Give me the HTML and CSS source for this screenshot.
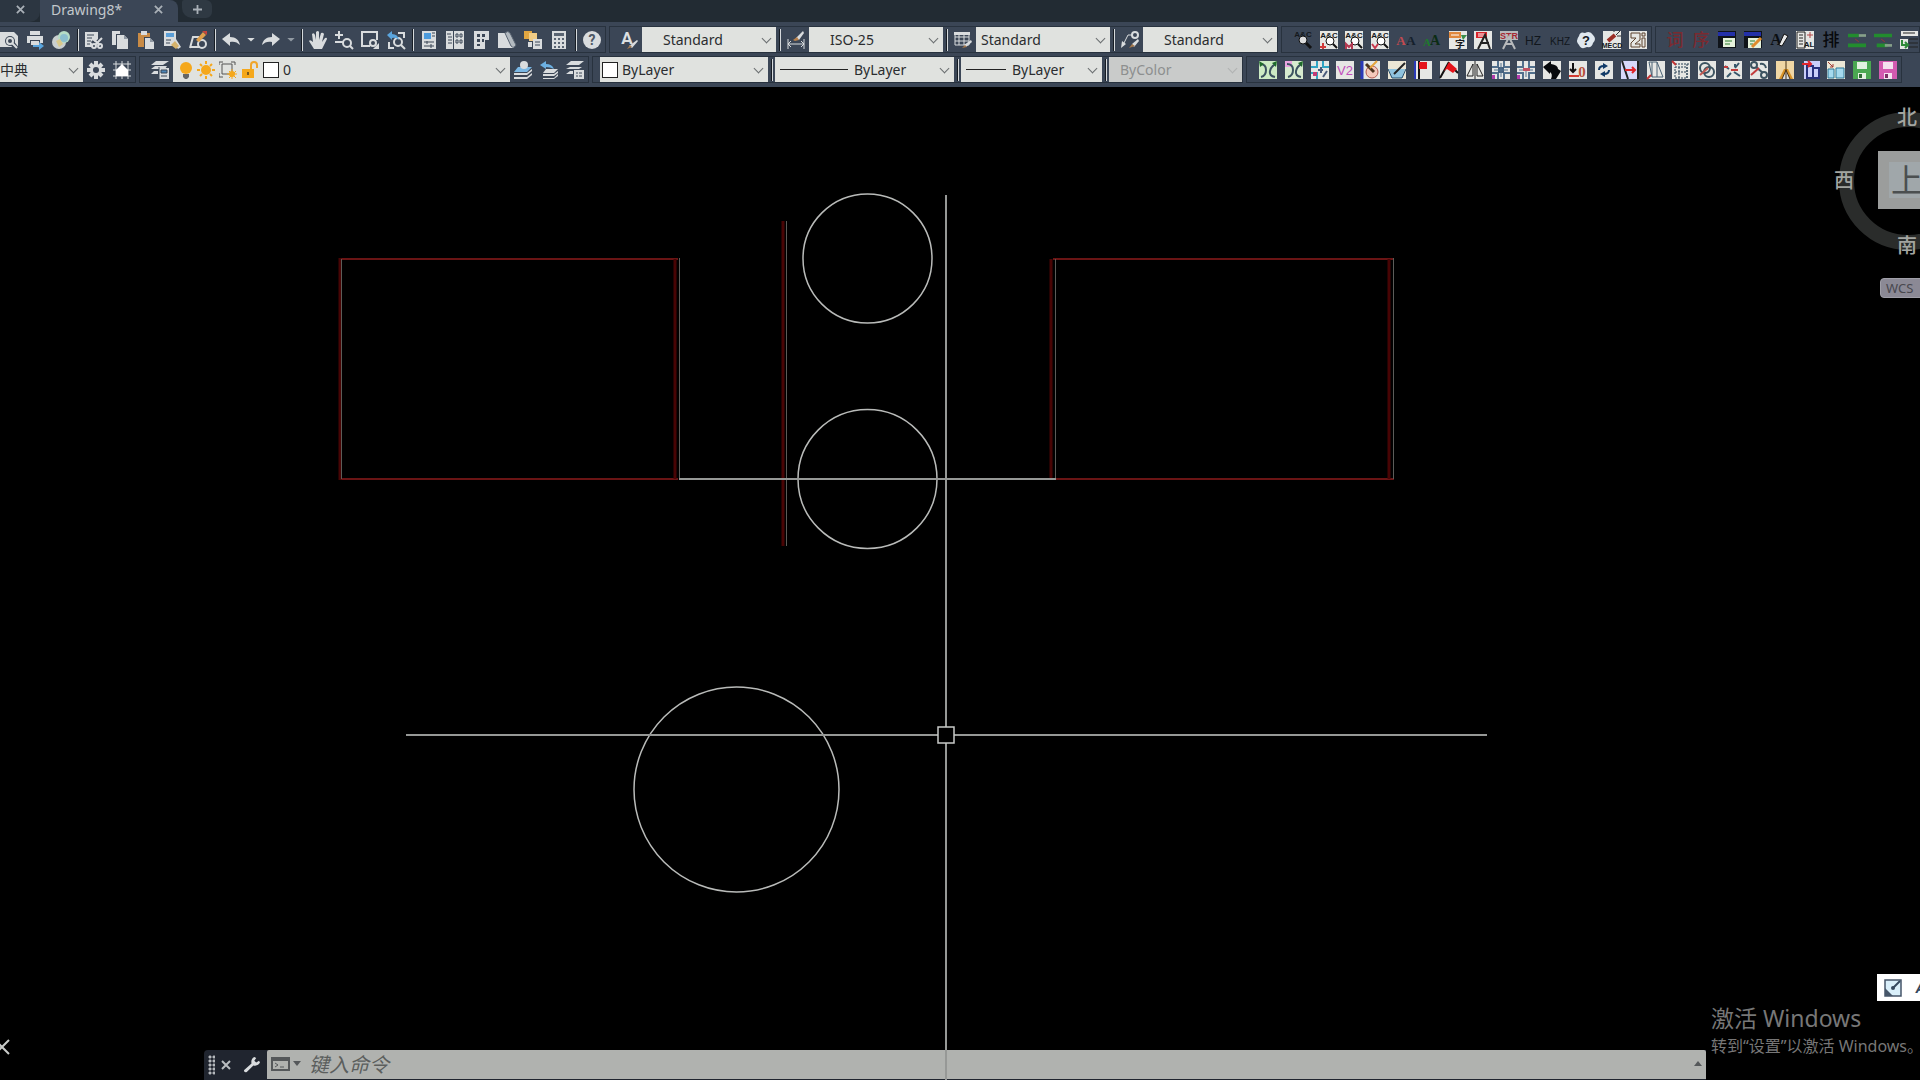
FILE: index.html
```html
<!DOCTYPE html>
<html lang="zh-CN">
<head>
  <meta charset="UTF-8">
  <meta name="viewport" content="width=device-width, initial-scale=1.0">
  <title>Drawing8*</title>
  <link rel="stylesheet" href="styles.css">
</head>
<body>
  <header>
    <nav class="tabs">
      <div class="tab prev"><button class="close" aria-label="关闭"><svg viewBox="0 0 10 10"><path d="M1 1l8 8M9 1l-8 8"/></svg></button></div>
      <div class="tab active"><a href="#drawing">Drawing8*</a><button class="close" aria-label="关闭 Drawing8"><svg viewBox="0 0 10 10"><path d="M1 1l8 8M9 1l-8 8"/></svg></button></div>
      <button class="tab add" aria-label="新建"><svg viewBox="0 0 10 10"><path d="M5 0v10M0 5h10"/></svg></button>
    </nav>

    <div class="row">
      <div class="panel standard">
        <button aria-label="打印预览"><svg viewBox="0 0 18 18"><path d="M0 1h14l4 4v11H0z"/><circle cx="10" cy="10" r="5" fill="#3b4656"/><path stroke="#3b4656" stroke-width="5" d="M12 12l5 6"/><circle class="ln" cx="10" cy="10" r="3"/><path class="ln" d="M12 12l5 5"/></svg></button>
        <button aria-label="打印"><svg viewBox="0 0 18 18"><path d="M4 0h10v4H4zM1 5h16v7h-3V9H4v3H1zM5 10h8v4H5z"/><path fill="#5aa5de" d="M7 14h6v-3l5 4-5 4v-3H7z"/></svg></button>
        <button aria-label="发布"><svg viewBox="0 0 18 18"><circle cx="7" cy="11" r="7" fill="#c9cfcf"/><circle cx="12" cy="6" r="6" fill="#b5dcc5"/><circle cx="12" cy="7" r="4" fill="#8bbfce"/><path fill="#d8c98c" d="M4 10l4-2 3 5-4 3z"/></svg></button>
        <i class="sep"></i>
        <button aria-label="剪切"><svg viewBox="0 0 18 18"><path d="M0 1h13v7l-3 3-2-2-2 2 2 3-2 2H0z"/><path stroke="#3b4656" d="M2 4h7M2 7h5M2 10h4M2 13h3"/><path class="ln" d="M8 8l7 6M17 7l-7 7"/><circle class="ln" cx="9" cy="15" r="2"/><circle class="ln" cx="15" cy="15" r="2"/></svg></button>
        <button aria-label="复制"><svg viewBox="0 0 18 18"><path d="M1 0h8v3H5v11H1z"/><path d="M6 4h7l4 4v10H6z"/><path fill="#8f98a2" d="M13 4v4h4z"/></svg></button>
        <button aria-label="粘贴"><svg viewBox="0 0 18 18"><path fill="#c98b45" d="M1 2h12v4H7v10H1z"/><path d="M4 0h6v4H4zM8 7h5l4 4v7H8z"/><path fill="#8f98a2" d="M13 7v4h4z"/></svg></button>
        <button aria-label="特性匹配"><svg viewBox="0 0 18 18"><path d="M1 0h12v9l-4 6H1z"/><path fill="#5b9fd8" d="M3 2h8v4H3z"/><path stroke="#3b4656" d="M3 9h5M3 12h4"/><path d="M9 10l4-2 5 8-3 2z"/><path fill="#d5b26c" d="M8 14l4-4 4 5-3 3z"/></svg></button>
        <button aria-label="块编辑器"><svg viewBox="0 0 18 18"><path class="ln" d="M1 17l3-11h6M1 16h10"/><circle class="ln" cx="13" cy="13" r="4"/><path fill="#e0a04c" d="M7 9L14 1l3 3-7 7z"/><path fill="#c8443c" d="M13 0h5v4z"/></svg></button>
        <i class="sep"></i>
        <button aria-label="放弃"><svg viewBox="0 0 18 18"><path d="M0 8l8-6v4c6 0 9 3 10 8-3-3-6-4-10-3v4z"/></svg></button>
        <button class="drop" aria-label="放弃列表"></button>
        <button aria-label="重做"><svg viewBox="0 0 18 18"><path d="M18 8l-8-6v4c-6 0-9 3-10 8 3-3 6-4 10-3v4z"/></svg></button>
        <button class="drop dim" aria-label="重做列表"></button>
        <i class="sep"></i>
        <button aria-label="平移"><svg viewBox="0 0 18 18"><path d="M5 18L0 10q1-2 4 1L3 3q2-2 3 1l1 5V1q2-2 3 0v8l2-7q2-1 3 1l-2 8 3-4q2-1 2 1l-5 10z"/></svg></button>
        <button aria-label="实时缩放"><svg viewBox="0 0 18 18"><path class="ln" d="M0 4h8M4 0v8M0 11h8M15 15l3 3"/><circle class="ln" cx="12" cy="12" r="4"/></svg></button>
        <button aria-label="窗口缩放"><svg viewBox="0 0 18 18"><path class="ln" d="M9 15H1V1h15v8"/><circle class="ln" cx="12" cy="12" r="3"/><path d="M18 12v6h-6z"/></svg></button>
        <button aria-label="缩放上一个"><svg viewBox="0 0 18 18"><path class="ln" d="M11 2h6v5M2 11v6h5M14 14l4 4"/><circle class="ln" cx="11" cy="11" r="4"/><path fill="#5aa5de" d="M0 4l5-4v3q6 0 7 6-3-3-7-2v2z"/></svg></button>
        <i class="sep"></i>
        <button aria-label="特性"><svg viewBox="0 0 18 18"><path d="M2 0h14v18H2z"/><path fill="#4d9bdc" d="M4 2h7v6H4z"/><path stroke="#3b4656" d="M12 2h3M12 5h3M4 11h10M4 15h10M7 10v3M11 13v4"/></svg></button>
        <button aria-label="设计中心"><svg viewBox="0 0 18 18"><path d="M0 0h7v18H0zM8 0h10v18H8z"/><path stroke="#3b4656" fill="none" d="M1 3h4M2 6h4M2 9h4M2 12h4M10 3h2v3h-2zM14 3h2v3h-2zM10 9h2v3h-2zM14 9h2v3h-2z"/></svg></button>
        <button aria-label="工具选项板"><svg viewBox="0 0 18 18"><path d="M2 0h15v9h-4v9H2z"/><path fill="#3b4656" d="M5 3h3v3H5zM10 3h3v3h-3zM5 8h3v3H5zM10 8h2v3h-2zM5 13h3v2H5z"/></svg></button>
        <button aria-label="图纸集"><svg viewBox="0 0 18 18"><path d="M0 2h8l8 15H0z"/><path fill="#b3bac0" stroke="#596472" d="M7 2q3-3 5 0l6 12q-2 4-5 1z"/></svg></button>
        <button aria-label="标记集"><svg viewBox="0 0 18 18"><path fill="#e1a641" d="M0 0h8v8H0z"/><path fill="#f0cc85" d="M5 2h8v8H5z"/><path d="M9 8h9v10H9zM4 11h4v5H4z"/><path stroke="#3b4656" d="M11 11h5M11 14h5"/></svg></button>
        <button aria-label="计算器"><svg viewBox="0 0 18 18"><path d="M2 0h14v18H2z"/><path fill="#596472" d="M4 2h10v3H4zM4 7h2v2H4zM8 7h2v2H8zM12 7h2v2h-2zM4 11h2v2H4zM8 11h2v2H8zM12 11h2v2h-2zM4 15h2v2H4zM8 15h2v2H8zM12 15h2v2h-2z"/></svg></button>
        <i class="sep"></i>
        <button aria-label="帮助"><svg viewBox="0 0 18 18"><circle cx="9" cy="9" r="9"/><text class="t" x="9" y="14" font-size="14">?</text></svg></button>
      </div>

      <div class="panel styles">
        <button aria-label="文字样式"><svg viewBox="0 0 18 18"><text class="t light" x="7" y="13" font-size="17">A</text><path d="M9 15l8-6 1 1-6 7z"/><path fill="#a3774b" d="M7 18l3-4 2 2z"/></svg></button>
        <span class="combo w134 in"><select aria-label="文字样式"><option>Standard</option></select></span>
        <i class="sep"></i>
        <button aria-label="标注样式"><svg viewBox="0 0 18 18"><path class="ln mid" d="M1 8v10M17 8v10M2 13h14M4 10l-3 3 3 3M14 10l3 3-3 3"/><path d="M9 7l7-7 1 2-5 7z"/><path fill="#b9824d" d="M6 9l4-3 2 3-4 1z"/></svg></button>
        <span class="combo w134 in"><select aria-label="标注样式"><option>ISO-25</option></select></span>
        <i class="sep"></i>
        <button aria-label="表格样式"><svg viewBox="0 0 18 18"><path class="ln mid" d="M1 2h14v12H1zM1 6h14M1 10h14M5 2v12M10 2v12"/><path d="M0 1h16v3H0z"/><path d="M10 14l7-5 1 2-6 5z"/><path fill="#a3774b" d="M8 17l3-3 2 2z"/></svg></button>
        <span class="combo w134"><select aria-label="表格样式"><option>Standard</option></select></span>
        <i class="sep"></i>
        <button aria-label="多重引线样式"><svg viewBox="0 0 18 18"><path class="ln mid" d="M2 14L7 4h5"/><path d="M0 17l1-7 4 3z"/><circle class="ln" cx="14" cy="4" r="3"/><path d="M11 13l6-5 1 2-5 6z"/><path fill="#a3774b" d="M8 17l3-4 3 2z"/></svg></button>
        <span class="combo w134 in"><select aria-label="多重引线样式"><option>Standard</option></select></span>
      </div>

      <div class="panel text">
        <div class="icons">
          <button aria-label="查找文字"><svg viewBox="0 0 18 18"><text class="k" x="9" y="6" font-size="8">A&amp;C</text><circle cx="9" cy="9" r="4" fill="#ddd" stroke="#111"/><path stroke="#111" stroke-width="3" d="M12 12l5 5"/></svg></button>
          <button aria-label="查找一"><svg viewBox="0 0 18 18"><path class="bg" d="M0 0h18v18H0z"/><text class="k" x="9" y="7" font-size="8">A&amp;C</text><circle cx="10" cy="10" r="4" fill="#fff" stroke="#111"/><path stroke="#111" stroke-width="2" d="M13 13l4 4"/><path stroke="#d03a3a" stroke-width="2" d="M0 16h6M3 12v6"/></svg></button>
          <button aria-label="查找二"><svg viewBox="0 0 18 18"><path class="bg" d="M0 0h18v18H0z"/><text class="k" x="9" y="7" font-size="8">A&amp;C</text><circle cx="10" cy="10" r="4" fill="#fff" stroke="#111"/><path stroke="#111" stroke-width="2" d="M13 13l4 4"/><path stroke="#b53a52" stroke-width="2" fill="none" d="M1 18v-5l3 3 3-3v5"/></svg></button>
          <button aria-label="查找三"><svg viewBox="0 0 18 18"><path class="bg" d="M0 0h18v18H0z"/><text class="k" x="9" y="7" font-size="8">A&amp;C</text><circle cx="10" cy="10" r="4" fill="#fff" stroke="#111"/><path stroke="#111" stroke-width="2" d="M13 13l4 4"/><path stroke="#c9394d" stroke-width="2" fill="none" d="M1 13l3 4 3-4"/></svg></button>
          <button aria-label="文字替换"><svg viewBox="0 0 18 18"><text class="s" x="4" y="14" font-size="13" fill="#c34a50">A</text><text class="s" x="14" y="14" font-size="13" fill="#15202c">A</text></svg></button>
          <button aria-label="文字刷"><svg viewBox="0 0 18 18"><text class="s" x="4" y="15" font-size="11" fill="#1d7a2c">A</text><text class="s" x="12" y="14" font-size="14" fill="#0c2c14">A</text></svg></button>
          <button aria-label="写字"><svg viewBox="0 0 18 18"><path class="bg" d="M0 0h18v18H0z"/><path fill="#e0883c" d="M0 1h12v6H0z"/><path stroke="#fff" d="M2 4h8"/><path fill="#3c8e4a" d="M12 4h6l-4 5z"/><text class="k" x="11" y="17" font-size="10">字</text></svg></button>
          <button aria-label="文字标记"><svg viewBox="0 0 18 18"><path class="bg" d="M0 0h18v18H0z"/><path fill="#d8232a" d="M2 1h11v6H2z"/><path stroke="#fff" d="M4 3h7M4 5h7"/><path stroke="#222" stroke-width="2" fill="none" d="M4 18L11 4l5 14M6 12h9"/></svg></button>
          <button aria-label="字符串"><svg viewBox="0 0 18 18"><path fill="#b7b9bb" d="M0 0h18v9H0z"/><text class="k wine" x="9" y="8" font-size="9">STR</text><path stroke="#b7b9bb" stroke-width="2" fill="none" d="M3 18L9 6l6 12M6 13h7"/></svg></button>
          <button aria-label="汉字"><svg viewBox="0 0 18 18"><text class="m" x="7" y="14" font-size="12">HZ</text></svg></button>
          <button aria-label="宽汉字"><svg viewBox="0 0 18 18"><text class="m" x="8" y="14" font-size="10">KHZ</text></svg></button>
          <button aria-label="查询"><svg viewBox="0 0 18 18"><path fill="#dfe7ee" d="M2 5q1-5 6-3 5-3 8 2 4 4 0 8-1 5-6 4-6 3-8-2-4-4 0-9z"/><text class="k" x="9" y="14" font-size="13">?</text></svg></button>
          <button aria-label="编码"><svg viewBox="0 0 18 18"><path class="bg" d="M0 0h18v18H0z"/><path stroke="#9c2f25" stroke-width="4" d="M5 10l7-6"/><path stroke="#333" d="M13 4l4-4M14 5h4M11 1V0"/><text class="k" x="9" y="17" font-size="7">MECD</text></svg></button>
          <button aria-label="转换"><svg viewBox="0 0 18 18"><path class="bg" d="M0 0h18v18H0z"/><path stroke="#5d432e" fill="none" d="M2 2h9v7l-5 4h5v3H2v-4l5-5H2zM13 2h3v3h-3zM13 7h3v9h-3z"/></svg></button>
        </div>
      </div>

      <div class="panel extra">
        <button aria-label="词"><svg viewBox="0 0 18 18"><text class="h" x="9" y="15" font-size="17" fill="#7a2a30">词</text></svg></button>
        <button aria-label="序"><svg viewBox="0 0 18 18"><text class="h" x="9" y="15" font-size="17" fill="#7a2a30">序</text></svg></button>
        <button aria-label="对话框"><svg viewBox="0 0 18 18"><path fill="#10141a" d="M0 0h18v17H0z"/><path fill="#2330a8" d="M0 1h17v4H0z"/><path fill="#e6f2dc" d="M5 7h12v9H5z"/><path stroke="#2a7d2e" d="M7 10h7M7 13h5"/></svg></button>
        <button aria-label="编辑对话框"><svg viewBox="0 0 18 18"><path fill="#10141a" d="M0 0h18v17H0z"/><path fill="#2330a8" d="M0 1h17v4H0z"/><path fill="#e6f2dc" d="M4 7h13v10H4z"/><path stroke="#2a7d2e" d="M6 10h5M6 13h3"/><path stroke="#df8b2c" stroke-width="3" d="M8 16l9-9"/></svg></button>
        <button aria-label="编辑文字"><svg viewBox="0 0 18 18"><text class="s" x="6" y="14" font-size="16" fill="#0b0e12">A</text><path fill="#e8e8e8" stroke="#111" d="M9 14l5-11 4 2-6 10z"/></svg></button>
        <button aria-label="文字列表"><svg viewBox="0 0 18 18"><path class="bg" d="M0 0h18v18H0z"/><path stroke="#222" fill="none" d="M1 1h8v16H1zM3 4h4M3 7h4M3 10h4M3 13h4"/><path stroke="#b34646" d="M11 4h6M14 1v6"/><text class="k" x="13" y="16" font-size="8">AL</text></svg></button>
        <button aria-label="排"><svg viewBox="0 0 18 18"><text class="h" x="9" y="15" font-size="17" fill="#07090c">排</text></svg></button>
        <button aria-label="上对齐"><svg viewBox="0 0 20 18"><path stroke="#228c2e" stroke-width="4" d="M0 4h12M0 15h20"/><path stroke="#86a08a" stroke-width="3" d="M12 4h8"/><path stroke="#a53232" d="M8 8l4 3"/></svg></button>
        <button aria-label="下对齐"><svg viewBox="0 0 20 18"><path stroke="#228c2e" stroke-width="4" d="M0 4h20M3 15h12"/><path stroke="#86a08a" stroke-width="3" d="M12 15h8"/><path stroke="#a53232" d="M8 8l4 3"/></svg></button>
        <button aria-label="段落"><svg viewBox="0 0 18 18"><path class="bg" d="M1 0h17v5H1zM0 8h8v10H0z"/><path stroke="#222" d="M3 2h12M9 8h9M9 12h9M9 16h9"/><path stroke="#2f8a39" stroke-width="2" fill="none" d="M2 9v5h5M5 11l3 3-3 3"/></svg></button>
      </div>
    </div>

    <div class="row">
      <div class="panel workspace">
        <span class="combo space"><select aria-label="工作空间"><option>中典</option></select></span>
        <button aria-label="设置"><svg viewBox="0 0 18 18"><circle cx="9" cy="9" r="6"/><path class="ln wide" d="M9 0v18M0 9h18M3 3l12 12M15 3L3 15"/><circle cx="9" cy="9" r="3" fill="#3b4656"/></svg></button>
        <button aria-label="我的工作空间"><svg viewBox="0 0 18 18"><path class="ln thin" d="M3 0v18M9 0v18M15 0v18M0 3h18M0 9h18M0 15h18"/><path fill="#fff" d="M3 9l6-6 6 6v6H3z"/></svg></button>
      </div>

      <div class="panel layers">
        <button aria-label="图层特性"><svg viewBox="0 0 18 18"><path d="M5 0h13l-6 4H0zM4 5h12l-2 3H0zM3 10h4v3H0z"/><path d="M8 7h10v11H8z"/><path fill="#4d86b8" stroke="#3b4656" d="M10 9h6v3h-6z"/><path stroke="#3b4656" d="M10 15h6M8 6v12"/></svg></button>
        <span class="combo layer">
          <svg class="bulb" viewBox="0 0 18 18"><circle cx="9" cy="7" r="6" fill="#f5a81c"/><path fill="#666" d="M6 13h6v3l-2 2H8l-2-2z"/></svg>
          <svg viewBox="0 0 18 18"><circle cx="9" cy="9" r="5" fill="#f5a81c"/><path stroke="#f5a81c" stroke-width="2" d="M9 0v3M9 15v3M0 9h3M15 9h3M3 3l2 2M13 13l2 2M15 3l-2 2M3 15l2-2"/></svg>
          <svg viewBox="0 0 18 18"><path stroke="#555" fill="none" d="M3 3h10v10H3zM0 4V1h4M12 1h4v3M0 12v4h4"/><circle cx="13" cy="13" r="3" fill="#f5a81c"/><path stroke="#f5a81c" d="M13 8v10M8 13h10M10 10l7 7M17 10l-7 7"/></svg>
          <svg viewBox="0 0 18 18"><path fill="#f5a81c" d="M1 8h12v9H1z"/><path fill="none" stroke="#f0a52a" stroke-width="2" d="M10 8V4q0-3 3-3t3 3v3"/><path fill="#7a5a20" d="M6 11h2v3H6z"/></svg>
          <b class="swatch"></b>
          <select aria-label="图层"><option>0</option></select>
        </span>
        <button aria-label="置为当前"><svg viewBox="0 0 18 18"><path fill="#7ab7e4" d="M4 6h14l-5 5H0z"/><path d="M0 12h13l5-4v2l-5 4H0zM0 16h13l5-4v2l-5 4H0z"/><circle cx="10" cy="4" r="4"/></svg></button>
        <button aria-label="上一个图层"><svg viewBox="0 0 18 18"><path d="M6 8h12l-4 4H3zM3 13h11l4-3v2l-4 3H3zM3 17h11l4-4v2l-4 3H3z"/><path fill="#6cb0e2" d="M0 4l6-4v3q6 0 8 5-4-2-8-2v2z"/></svg></button>
        <button aria-label="图层状态"><svg viewBox="0 0 18 18"><path d="M5 0h13l-5 4H0zM4 6h12l-3 2H0zM4 10h3v3H0z"/><path d="M8 9h10v9H8z"/><path stroke="#3b4656" d="M10 12h2M13 12h3M10 15h2M13 15h3"/></svg></button>
      </div>

      <div class="panel props">
        <span class="combo color"><b class="swatch"></b><select aria-label="颜色"><option>ByLayer</option></select></span>
        <i class="sep"></i>
        <span class="combo ltype"><b class="line long"></b><select aria-label="线型"><option>ByLayer</option></select></span>
        <i class="sep"></i>
        <span class="combo lweight"><b class="line"></b><select aria-label="线宽"><option>ByLayer</option></select></span>
        <i class="sep"></i>
        <span class="combo plot off"><select aria-label="打印样式" disabled><option>ByColor</option></select></span>
      </div>

      <div class="panel tools">
        <div class="icons">
          <button aria-label="对称一"><svg viewBox="0 0 18 18"><path fill="#cdebc4" d="M0 0h18v18H0z"/><path class="dk" d="M1 3q6 0 6 6t-5 7M17 3q-5 2-6 7t5 6"/><path fill="#1e6b2a" d="M0 0l5 3-4 3zM18 0l-5 2 4 4z"/></svg></button>
          <button aria-label="对称二"><svg viewBox="0 0 18 18"><path fill="#d7ebcf" d="M0 0h18v18H0z"/><path fill="#e9a3df" d="M0 0h7v6H0z"/><path class="dk" d="M2 3q6 0 6 6t-5 7M17 3q-5 2-6 7t5 6"/><path fill="#1e6b2a" d="M18 0l-5 2 4 4z"/></svg></button>
          <button aria-label="块阵列"><svg viewBox="0 0 18 18"><path class="bg" d="M0 0h18v18H0z"/><path stroke="#31a5c4" stroke-width="2" fill="none" d="M6 0v6H0M12 0v6h6M0 12h6v6"/><path stroke="#4b5b7c" stroke-width="2" fill="none" d="M7 9h5M10 6v6M16 10l-4 6"/><path fill="#c23a74" d="M2 11h4v4H2z"/></svg></button>
          <button aria-label="版本二"><svg viewBox="0 0 18 18"><path class="bg" d="M0 0h18v18H0z"/><text class="m pink" x="9" y="14" font-size="13">V2</text></svg></button>
          <button aria-label="画圆"><svg viewBox="0 0 18 18"><path class="bg" d="M0 0h18v18H0z"/><path stroke="#2a39b8" stroke-width="3" d="M0 0v18"/><circle cx="10" cy="11" r="6" fill="#f4c9bb" stroke="#b3594f"/><path stroke="#4c3420" stroke-width="3" d="M4 3l8 8"/><path stroke="#e6a43c" stroke-width="2" d="M8 7l7-7"/></svg></button>
          <button aria-label="刷子"><svg viewBox="0 0 18 18"><path fill="#ebe6d5" d="M0 0h18v18H0z"/><path fill="#8fc3df" d="M1 8h16l-3 9H4z"/><path stroke="#204a6b" fill="none" d="M0 8l4 9h10l4-9"/><path stroke="#222" stroke-width="2" d="M6 13L17 2"/></svg></button>
          <button aria-label="红旗"><svg viewBox="0 0 18 18"><path class="bg" d="M0 0h18v18H0z"/><path stroke="#2a39b8" stroke-width="2" d="M1 0v18"/><path stroke="#111" stroke-width="2" d="M5 0v18"/><path fill="#e5141b" d="M5 1h8v7H5z"/></svg></button>
          <button aria-label="斜旗"><svg viewBox="0 0 18 18"><path class="bg" d="M0 0h18v18H0z"/><path stroke="#111" stroke-width="2" d="M9 1L0 17M14 8l4 4"/><path fill="#e5141b" d="M9 1l8 7-4 4-6-4-3 2z"/></svg></button>
          <button aria-label="镜像"><svg viewBox="0 0 18 18"><path class="bg" d="M0 0h18v18H0z"/><path stroke="#222" fill="none" d="M9 0v18M7 3v12H1zM11 3v12h6z"/></svg></button>
          <button aria-label="阵列一"><svg viewBox="0 0 18 18"><path class="bg" d="M0 0h18v18H0z"/><path stroke="#52708c" stroke-width="2" fill="none" d="M0 6h6V0M12 0v6h6M0 12h6v6M12 18v-6h6"/><path fill="#45607d" d="M6 6h6v6H6z"/><path stroke="#52708c" d="M9 2v14M2 9h14"/><path fill="#b03bab" d="M0 14h3v4H0z"/></svg></button>
          <button aria-label="阵列二"><svg viewBox="0 0 18 18"><path class="bg" d="M0 0h18v18H0z"/><path stroke="#52708c" stroke-width="2" fill="none" d="M0 6h6V0M12 0v6h6M0 12h6v6M12 18v-6h6"/><path stroke="#52708c" d="M9 9v7M2 9h14"/><path fill="#c05262" d="M6 7h7v3H6z"/><path fill="#b03bab" d="M0 14h3v4H0z"/></svg></button>
          <button aria-label="折返"><svg viewBox="0 0 18 18"><path class="bg" d="M0 0h18v18H0z"/><path d="M0 6l8-6v3q7 1 7 5l3 2-5 8H8q2-5-1-7v2z" fill="#07090c"/></svg></button>
          <button aria-label="归零"><svg viewBox="0 0 18 18"><path class="bg" d="M0 0h18v18H0z"/><path stroke="#111" stroke-width="2" fill="none" d="M4 2v9M1 8l3 3 3-3"/><path stroke="#d23c32" stroke-width="2" d="M0 15h10"/><text class="s" x="13" y="16" font-size="15" fill="#b8503c">0</text></svg></button>
          <button aria-label="刷新"><svg viewBox="0 0 18 18"><path class="bg" d="M0 0h18v18H0z"/><path stroke="#123b68" stroke-width="2" fill="none" d="M4 9q0-4 5-4M14 9q0 4-5 4"/><path fill="#123b68" d="M8 2l5 3-5 3zM10 10v6l-5-3z"/></svg></button>
          <button aria-label="偏移"><svg viewBox="0 0 18 18"><path fill="#d8d8fa" d="M0 0h18v18H0z"/><path stroke="#222" stroke-width="2" d="M1 0l6 18M17 0v18"/><path stroke="#e0252b" stroke-width="2" fill="none" d="M4 9h10M11 6l3 3-3 3"/></svg></button>
          <button aria-label="斜切"><svg viewBox="0 0 18 18"><path class="bg" d="M0 0h18v18H0z"/><path stroke="#4a6275" fill="none" d="M2 1h8l6 15H5zM5 1v15M10 1v15"/><path stroke="#c23232" stroke-width="2" d="M0 18l4-4"/></svg></button>
          <button aria-label="边界"><svg viewBox="0 0 18 18"><path class="bg" d="M0 0h18v18H0z"/><path stroke="#263e52" stroke-dasharray="2 1" fill="none" d="M3 6h12v11H3zM3 3h15M15 3v14M7 6v11M3 11h12"/><path stroke="#c23232" stroke-width="2" d="M0 0l4 4"/></svg></button>
          <button aria-label="取消圆"><svg viewBox="0 0 18 18"><path class="bg" d="M0 0h18v18H0z"/><circle class="dk" cx="7" cy="7" r="5"/><circle class="dk" cx="11" cy="11" r="5"/><path stroke="#c25a52" stroke-width="2" d="M2 14l8-7"/></svg></button>
          <button aria-label="打断"><svg viewBox="0 0 18 18"><path class="bg" d="M0 0h18v18H0z"/><path stroke="#37576b" stroke-width="2" d="M1 5l4 3M10 11l6 4M3 16l4-4M11 7l4-5M11 3v3"/><path stroke="#c23c3c" stroke-width="2" d="M0 6h4M7 9h7"/></svg></button>
          <button aria-label="连接"><svg viewBox="0 0 18 18"><path class="bg" d="M0 0h18v18H0z"/><path class="dk" d="M6 6l7 6M10 3q5-1 6 4"/><circle class="dk" cx="4" cy="4" r="3"/><circle class="dk" cx="14" cy="14" r="3"/><path stroke="#c23c3c" stroke-width="2" d="M1 14l8-7"/></svg></button>
          <button aria-label="清理"><svg viewBox="0 0 18 18"><path fill="#f0d7a5" d="M0 0h18v18H0z"/><path fill="#d99428" d="M8 8h4l5 10H3z"/><path stroke="#4b3314" d="M10 0v9M6 18l4-9 4 9M10 9v9"/></svg></button>
          <button aria-label="移动复制"><svg viewBox="0 0 18 18"><path fill="#c9cefa" d="M2 0h16v18H2z"/><path stroke="#27317d" stroke-width="2" fill="none" d="M5 5h6v12H5zM11 7h6v10h-6"/><path stroke="#e0252b" stroke-width="2" fill="none" d="M0 3h8M6 0l3 3-3 3"/></svg></button>
          <button aria-label="窗口"><svg viewBox="0 0 18 18"><path fill="#ece8d6" d="M0 0h18v18H0z"/><path fill="#a5daee" stroke="#2c7898" d="M1 8h6v9H1zM9 7h8v10H9z"/><path stroke="#a3372c" d="M1 1l5 5M6 3v3H3"/></svg></button>
          <button aria-label="保存"><svg viewBox="0 0 18 18"><path fill="#4aa851" d="M0 0h18v18H0z"/><path fill="#e2f1e0" d="M4 1h10v7H4zM5 12h8v6H5z"/><path fill="#2f6b35" d="M6 13h3v4H6z"/></svg></button>
          <button aria-label="另存"><svg viewBox="0 0 18 18"><path fill="#d35ab0" d="M0 0h18v18H0z"/><path fill="#f5e1ef" d="M4 1h10v7H4zM5 12h8v6H5z"/><path fill="#7d2f66" d="M6 13h3v4H6z"/></svg></button>
        </div>
      </div>
    </div>
  </header>

  <main id="drawing">
    <svg class="model" viewBox="0 0 1920 993" preserveAspectRatio="xMinYMin slice">
      <!-- walls -->
      <g class="red">
        <path d="M340 172h338M340 392h338M1053 172h341M1053 392h341"/>
        <path class="faint" d="M340 171v222M675 172v220M783 134v325M1051 172v220M1389 172v220"/>
      </g>
      <path class="grey" d="M341.500 172v220M679.500 171v221M786.500 134v325M1055.500 172v220M1393.500 171v221"/>
      <!-- circles and axis -->
      <g class="white">
        <circle cx="867.500" cy="171.500" r="64.500"/>
        <circle cx="867.500" cy="392" r="69.500"/>
        <circle cx="736.500" cy="702.500" r="102.500"/>
      </g>
      <path class="axis" d="M679 392h377"/>
      <!-- crosshair -->
      <path class="axis" d="M946 108v532M946 656v337M406 648h532M954 648h533"/>
      <rect class="pick" x="938" y="640" width="16" height="16"/>
      <path class="ucs" d="M-5 953l14 14M9 953l-14 14"/>
    </svg>

    <div class="viewcube">
      <span class="n">北</span>
      <span class="w">西</span>
      <button class="face">上</button>
      <span class="s">南</span>
      <button class="wcs">WCS</button>
    </div>

    <div class="watermark">
      <p class="big">激活 Windows</p>
      <p>转到“设置”以激活 Windows。</p>
    </div>

    <div class="ime">
      <svg viewBox="0 0 18 18"><path fill="#d9effa" stroke="#465669" stroke-width="1.500" d="M1 1h16v16H1z"/><path fill="#465669" d="M1 9l8 8H1z"/><circle cx="9" cy="9" r="2" fill="#34485e"/><path stroke="#34485e" stroke-width="2" d="M9 9l7-7"/></svg>
      <em>A</em>
    </div>

    <div class="command">
      <i class="grip"></i>
      <button class="close" aria-label="关闭命令行"><svg viewBox="0 0 10 10"><path d="M1 1l8 8M9 1l-8 8"/></svg></button>
      <button aria-label="自定义"><svg viewBox="0 0 18 18"><path d="M1 15L9 8q-1-5 3-7l2 1-2 3 2 2 3-2 1 2q-2 4-7 3l-7 7q-3 1-3-2z"/></svg></button>
      <div class="prompt">
        <button aria-label="最近使用的命令"><svg viewBox="0 0 20 16"><path fill="none" stroke="#55585a" stroke-width="2" d="M1 2h17v12H1z"/><path fill="#55585a" d="M1 1h17v4H1z"/><path fill="none" stroke="#55585a" d="M4 7l3 2-3 2M9 11h4"/></svg></button>
        <b class="down"></b>
        <input type="text" placeholder="键入命令" aria-label="键入命令">
        <button class="up" aria-label="历史记录"></button>
      </div>
    </div>
  </main>
</body>
</html>
```
FILE: styles.css
```css
* {
  box-sizing: border-box;
}
body {
  margin: 0;
  min-height: 100vh;
  display: flex;
  flex-direction: column;
  overflow: hidden;
  background: #000;
  font-family: "Noto Sans", "Noto Sans CJK SC", sans-serif;
  font-size: 14px;
}
button {
  padding: 0;
  border: 0;
  background: none;
  font: inherit;
  color: inherit;
}
svg {
  display: block;
  fill: #d9dcde;
}

/* tabs */
header {
  background: #3b4656;
  padding-bottom: 4px;
}
.tabs {
  display: flex;
  height: 26px;
  background: #222b33;
  border-bottom: 4px solid #3b4656;
}
.tab {
  display: flex;
  align-items: center;
}
.tab svg {
  width: 9px;
  height: 9px;
  stroke: #a9b0b7;
  stroke-width: 2;
}
.prev {
  width: 40px;
  padding: 0 0 4px 16px;
  background: #2c3641;
  border-radius: 0 0 10px 0;
}
.active {
  width: 138px;
  justify-content: space-between;
  padding: 0 15px 4px 11px;
  background: #3b4656;
  border-radius: 0 8px 0 0;
}
.active a {
  color: #c3c8cc;
  font-size: 14px;
  text-decoration: none;
}
.add {
  width: 30px;
  height: 18px;
  margin-left: 4px;
  justify-content: center;
  background: #2f3943;
  border-radius: 2px 6px 6px 10px;
}

/* toolbars */
.row {
  display: flex;
  gap: 3px;
  margin-bottom: 3px;
}
.row:last-child {
  margin-bottom: 0;
}
.panel {
  display: flex;
  flex-shrink: 0;
  align-items: center;
  height: 27px;
  border: 1px solid #28323e;
}
.panel button {
  width: 26px;
  flex-shrink: 0;
}
.panel button svg {
  width: 18px;
  height: 18px;
  margin: auto;
  overflow: visible;
}
.panel .drop {
  width: 14px;
  height: 4px;
  background: #d9dcde;
  clip-path: polygon(20% 0, 80% 0, 50% 100%);
}
.panel .dim {
  background: #929ba4;
}
.ln {
  fill: none;
  stroke: #d9dcde;
  stroke-width: 2;
}
.ln.wide {
  stroke-width: 4;
}
.ln.mid,
.ln.thin {
  stroke-width: 1;
}
.dk {
  fill: none;
  stroke: #3c5360;
  stroke-width: 2;
}
.bg {
  fill: #e6e7e4;
}
text {
  text-anchor: middle;
}
.t {
  font-family: Roboto, sans-serif;
  font-weight: bold;
  fill: #4b5664;
}
.light {
  fill: #dcdfe0;
}
.k {
  font-family: "Liberation Sans", "Noto Sans CJK SC", sans-serif;
  font-weight: bold;
  fill: #14181c;
}
.wine {
  fill: #a62832;
}
.m {
  font-family: "Liberation Sans", sans-serif;
  fill: #11161c;
}
.pink {
  fill: #c24dbd;
}
text.s {
  font-family: "Liberation Serif", serif;
  font-weight: bold;
}
.h {
  font-family: "Noto Sans CJK SC", sans-serif;
  font-weight: 500;
}
.sep {
  width: 2px;
  height: 22px;
  margin: 0 2px 0 3px;
  background: #d5d9dc;
  border-left: 1px solid #161c24;
}
.standard {
  padding-left: 0;
  border-left: 0;
}
.standard button:first-child {
  margin-left: -4px;
}
.styles {
  padding-left: 6px;
}
.text,
.tools {
  padding-left: 8px;
}
.icons {
  display: flex;
  width: 361px;
}
.tools .icons {
  width: 646px;
}
.panel .icons button {
  width: auto;
  flex: 1;
}
.extra {
  flex: 1 0 0;
  overflow: hidden;
  padding-left: 6px;
}
.workspace {
  border-left: 0;
}
.layers,
.props {
  padding-left: 7px;
}

/* drop-downs */
.combo {
  position: relative;
  display: flex;
  align-items: center;
  height: 25px;
  padding-left: 5px;
  background: #e0e2df;
}
.combo::after {
  content: "";
  position: absolute;
  right: 6px;
  top: 8px;
  width: 6px;
  height: 6px;
  border: solid #6a6e70;
  border-width: 0 1px 1px 0;
  transform: rotate(45deg);
}
.combo select {
  flex: 1;
  min-width: 0;
  height: 25px;
  padding: 0;
  border: 0;
  appearance: none;
  background: none;
  font: inherit;
  color: #2b2d2f;
}
.combo svg {
  width: 18px;
  height: 18px;
}
.w134 {
  width: 134px;
}
.in {
  padding-left: 21px;
}
.space {
  width: 83px;
  padding-left: 0;
}
.layer {
  width: 337px;
  gap: 4px;
}
.bulb {
  margin: 0 -2px 0 -1px;
}
.swatch {
  width: 16px;
  height: 16px;
  margin-right: 4px;
  background: #fff;
  border: 1px solid #222;
}
.layer .swatch {
  margin-right: 0;
}
.color {
  width: 168px;
  padding-left: 2px;
}
.ltype {
  width: 179px;
}
.lweight {
  width: 141px;
}
.line {
  width: 40px;
  height: 1px;
  margin-right: 6px;
  background: #222;
}
.line.long {
  width: 68px;
}
.plot {
  width: 133px;
  padding-left: 11px;
}
.off {
  background: #c9cbca;
}
.off select {
  color: #8d8f8f;
  opacity: 1;
}
.off::after {
  border-color: #b0b2b2;
}

/* drawing area */
main {
  position: relative;
  flex: 1;
  display: flex;
  flex-direction: column;
  justify-content: flex-end;
}
.model {
  position: absolute;
  inset: 0;
  z-index: 1;
  width: 100%;
  height: 100%;
  fill: none;
  pointer-events: none;
}
.red {
  stroke: #6a1414;
  stroke-width: 2;
}
.red .faint {
  stroke: #480404;
  stroke-width: 3;
}
.grey {
  stroke: #5c5c58;
}
.white {
  stroke: #b9bbb9;
  stroke-width: 1.5;
}
.axis {
  stroke: #969896;
  stroke-width: 2;
}
.pick {
  stroke: #c8cac8;
  stroke-width: 1.5;
}
.ucs {
  stroke: #c9cbc9;
  stroke-width: 2;
}

/* view cube hangs over the right edge */
.viewcube {
  position: absolute;
  top: 25px;
  right: -57px;
  width: 138px;
  height: 138px;
  border: 15px solid #2a2c2b;
  border-radius: 50%;
  color: #a3a5a1;
  font-size: 20px;
  font-weight: 500;
  line-height: 24px;
}
.viewcube > * {
  position: absolute;
}
.n {
  top: -21px;
  left: 43px;
}
.w {
  top: 42px;
  left: -20px;
}
.viewcube .s {
  top: 107px;
  left: 43px;
}
.face {
  top: 24px;
  left: 24px;
  width: 58px;
  height: 58px;
  border: 11px solid #9b9d9c;
  background: #a0a7aa;
  color: #4b4f50;
  font-size: 32px;
  font-weight: normal;
  line-height: 32px;
}
.wcs {
  top: 151px;
  left: 26px;
  width: 60px;
  height: 20px;
  padding-left: 5px;
  background: #8b8995;
  border: 1px solid #a09fa8;
  border-radius: 4px;
  color: #48474e;
  font-size: 13px;
  font-weight: normal;
  line-height: 16px;
  text-align: left;
}
.watermark {
  position: absolute;
  right: 0;
  bottom: 22px;
  width: 209px;
  overflow: hidden;
  color: #777;
  font-size: 16px;
  line-height: 24px;
  white-space: nowrap;
}
.watermark p {
  margin: 0;
}
.watermark .big {
  font-size: 23px;
  line-height: 32px;
}
.ime {
  position: absolute;
  right: 0;
  bottom: 79px;
  width: 43px;
  height: 27px;
  display: flex;
  align-items: center;
  gap: 14px;
  padding-left: 7px;
  overflow: hidden;
  background: #fff;
}
.ime svg {
  width: 18px;
  height: 18px;
  flex-shrink: 0;
}
.ime em {
  color: #34485e;
  font-weight: bold;
}

/* command line */
.command {
  display: flex;
  align-items: center;
  height: 30px;
  margin: 0 214px 0 204px;
  padding: 0 0 1px 4px;
  background: #20252f;
  border-radius: 4px 0 0 0;
}
.grip {
  width: 7px;
  height: 20px;
  margin-right: 6px;
  background: radial-gradient(circle, #b4b8bc 1px, transparent 2px) 0 0 / 4px 4px;
}
.command .close svg {
  width: 10px;
  height: 10px;
  stroke: #b9bdc0;
  stroke-width: 2;
}
.command > button {
  margin-right: 12px;
}
.command > button svg {
  width: 17px;
}
.prompt {
  flex: 1;
  display: flex;
  align-items: center;
  height: 29px;
  margin-left: -5px;
  padding: 0 4px 2px;
  background: #b0b2af;
  border-radius: 2px 2px 0 0;
}
.prompt svg {
  width: 20px;
  height: 16px;
}
.down {
  width: 8px;
  height: 5px;
  margin-left: 2px;
  background: #55585a;
  clip-path: polygon(0 0, 100% 0, 50% 100%);
}
.prompt input {
  flex: 1;
  padding: 0 0 0 8px;
  border: 0;
  background: none;
  font: italic 20px "Noto Sans CJK SC", sans-serif;
  line-height: 26px;
}
.prompt input::placeholder {
  color: #5b5e5d;
}
.up {
  width: 8px;
  height: 5px;
  background: #55585a;
  clip-path: polygon(50% 0, 100% 100%, 0 100%);
}
```
